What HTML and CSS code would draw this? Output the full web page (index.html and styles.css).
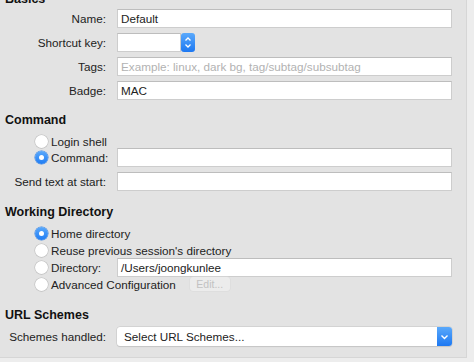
FILE: index.html
```html
<!DOCTYPE html>
<html>
<head>
<meta charset="utf-8">
<link rel="stylesheet" href="styles.css">
</head>
<body>
<div class="panel">
  <div class="heading h-basics">Basics</div>
  <div class="row"><span class="label">Name:</span><div class="field">Default</div></div>
  <div class="row"><span class="label">Shortcut key:</span>
    <div class="stepper-wrap"><div class="field short"></div><div class="stepper"><svg width="8" height="13" viewBox="0 0 8 13"><path d="M1.5 4.5 L4 2 L6.5 4.5 M1.5 8.5 L4 11 L6.5 8.5" fill="none" stroke="#fff" stroke-width="1.3"/></svg></div></div>
  </div>
  <div class="row"><span class="label">Tags:</span><div class="field placeholder">Example: linux, dark bg, tag/subtag/subsubtag</div></div>
  <div class="row"><span class="label">Badge:</span><div class="field">MAC</div></div>

  <div class="heading h-command">Command</div>
  <div class="radio-row r-login"><span class="radio"></span><span>Login shell</span></div>
  <div class="row radio-field"><div class="rlabel"><span class="radio on"></span><span>Command:</span></div><div class="field"></div></div>
  <div class="row"><span class="label">Send text at start:</span><div class="field"></div></div>

  <div class="heading h-wd">Working Directory</div>
  <div class="radio-row r-home"><span class="radio on"></span><span>Home directory</span></div>
  <div class="radio-row r-reuse"><span class="radio"></span><span>Reuse previous session's directory</span></div>
  <div class="row radio-field r-dir"><div class="rlabel"><span class="radio"></span><span>Directory:</span></div><div class="field">/Users/joongkunlee</div></div>
  <div class="radio-row r-adv"><span class="radio"></span><span>Advanced Configuration</span><span class="btn">Edit...</span></div>

  <div class="heading h-url">URL Schemes</div>
  <div class="row r-schemes"><span class="label">Schemes handled:</span>
    <div class="select"><span class="select-text">Select URL Schemes...</span><span class="select-btn"><svg width="9" height="6" viewBox="0 0 9 6"><path d="M1.5 1.5 L4.5 4.5 L7.5 1.5" fill="none" stroke="#fff" stroke-width="1.4"/></svg></span></div>
  </div>
</div>
</body>
</html>
```
FILE: styles.css
```css
html, body {
  margin: 0;
  padding: 0;
  background: #ededed;
  width: 474px;
  height: 362px;
  overflow: hidden;
  font-family: "Liberation Sans", Arial, sans-serif;
  font-size: 11.7px;
  color: #222;
}
.panel {
  width: 467px;
  height: 358px;
  background: #e3e3e3;
  border-right: 1px solid #d6d6d6;
  border-bottom: 1px solid #d6d6d6;
  box-sizing: border-box;
  overflow: hidden;
}
.heading {
  font-weight: bold;
  font-size: 12.5px;
  color: #111;
  height: 16px;
  line-height: 16px;
  padding-left: 5px;
}
.h-basics { margin-top: -9px; margin-bottom: 2px; }
.h-command { margin-top: 12px; }
.h-wd { margin-top: 13px; }
.h-url { margin-top: 16px; }
.row {
  display: grid;
  grid-template-columns: 106px 335px;
  column-gap: 11px;
  align-items: center;
  height: 19px;
  margin-bottom: 5px;
}
.label {
  text-align: right;
  white-space: nowrap;
}
.field {
  height: 19px;
  box-sizing: border-box;
  background: #fff;
  border: 1px solid #cdcdcd;
  border-top-color: #bdbdbd;
  padding-left: 3px;
  line-height: 17px;
  white-space: nowrap;
  overflow: hidden;
}
.placeholder { color: #b2b2b2; }
.stepper-wrap {
  display: flex;
  align-items: center;
}
.field.short { width: 64px; }
.stepper {
  width: 14px;
  height: 19px;
  border-radius: 3px;
  background: linear-gradient(#5aa9fb, #1d78f2);
  display: flex;
  align-items: center;
  justify-content: center;
}
.radio-row {
  display: flex;
  align-items: center;
  padding-left: 35px;
  gap: 3px;
  height: 16px;
  white-space: nowrap;
}
.r-login { margin-top: 6px; height: 14px; }
.r-home { margin-top: 5px; height: 17px; }
.r-reuse { height: 16px; }
.r-dir { margin-bottom: 0; }
.r-adv { height: 14px; }
.radio-field .rlabel {
  display: flex;
  align-items: center;
  gap: 3px;
  padding-left: 35px;
  white-space: nowrap;
}
.radio {
  width: 13px;
  height: 13px;
  border-radius: 50%;
  background: #fff;
  box-shadow: 0 0 0 0.5px #bcbcbc, 0 0.5px 1px rgba(0,0,0,0.15);
  box-sizing: border-box;
  flex: none;
  position: relative;
}
.radio.on {
  background: linear-gradient(#5aa9fb, #1f7cf4);
  box-shadow: 0 0 0 0.5px #3c84e0;
}
.radio.on::after {
  content: "";
  position: absolute;
  left: 4px;
  top: 4px;
  width: 5px;
  height: 5px;
  border-radius: 50%;
  background: #fff;
}
.btn {
  margin-left: 11px;
  width: 40px;
  height: 14px;
  line-height: 14px;
  text-align: center;
  background: #ececec;
  border-radius: 3px;
  box-shadow: 0 0 0 0.5px #d9d9d9;
  color: #c2c2c2;
  font-size: 10.5px;
}
.r-schemes { margin-top: 4px; }
.select {
  display: flex;
  height: 19px;
  background: #fff;
  border-radius: 3px;
  box-shadow: 0 0 0 0.5px #c4c4c4, 0 1px 1px rgba(0,0,0,0.12);
}
.select-text {
  flex: 1;
  padding-left: 7px;
  line-height: 19px;
}
.select-btn {
  width: 15px;
  height: 19px;
  border-radius: 0 3px 3px 0;
  background: linear-gradient(#5aa9fb, #1d78f2);
  display: flex;
  align-items: center;
  justify-content: center;
}
```
